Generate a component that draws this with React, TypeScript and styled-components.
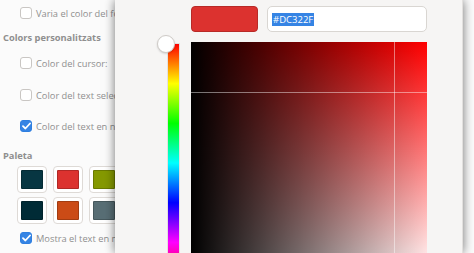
import React from "react";
import styled, { createGlobalStyle } from "styled-components";

const Global = createGlobalStyle`
  html, body { margin: 0; padding: 0; }
  body {
    width: 474px; height: 253px; overflow: hidden;
    background: #d9d9d9;
    font-family: "Open Sans", "Noto Sans", sans-serif;
  }
`;

const Screen = styled.div`
  display: flex;
  width: 474px;
  height: 253px;
  overflow: hidden;
  background: #fbfbfb;
`;

const Settings = styled.div`
  flex: 0 0 115px;
  overflow: hidden;
  white-space: nowrap;
  color: #8f8f8f;
  font-size: 9.3px;
  padding-top: 6px;
`;

const CheckRow = styled.div<{ $mt?: number }>`
  display: flex;
  align-items: center;
  gap: 4px;
  height: 14px;
  padding-left: 20px;
  margin-top: ${(p) => p.$mt ?? 0}px;
`;

const Box = styled.span<{ $on?: boolean }>`
  flex: 0 0 auto;
  width: 12px;
  height: 12px;
  border-radius: 3px;
  box-sizing: border-box;
  border: 1px solid ${(p) => (p.$on ? "#2f7fe0" : "#c9c6c3")};
  background: ${(p) => (p.$on ? "#3584e4" : "#fff")};
  display: flex;
  align-items: center;
  justify-content: center;
`;

const Heading = styled.div<{ $mt: number }>`
  font-weight: 700;
  padding-left: 3px;
  height: 14px;
  line-height: 14px;
  margin-top: ${(p) => p.$mt}px;
`;

const Palette = styled.div`
  display: grid;
  grid-template-columns: repeat(3, 30px);
  grid-auto-rows: 27px;
  column-gap: 6px;
  row-gap: 4px;
  padding-left: 17px;
  margin-top: 3px;
`;

const Swatch = styled.div`
  box-sizing: border-box;
  border: 1px solid #dedad6;
  border-radius: 4px;
  background: #fff;
  padding: 3px;
  display: flex;
`;

const SwatchColor = styled.div<{ $c: string }>`
  flex: 1;
  background: ${(p) => p.$c};
  border: 1px solid rgba(0, 0, 0, 0.2);
  border-radius: 1px;
`;

const Dialog = styled.div`
  flex: 0 0 348px;
  position: relative;
  z-index: 1;
  background: #f6f5f4;
  box-shadow: 0 0 10px rgba(0, 0, 0, 0.55);
  border-right: 1px solid #e2e0de;
  box-sizing: border-box;
  padding: 6px 0 0 48px;
  display: grid;
  grid-template-columns: 24px 236px;
  grid-template-rows: 26px 236px;
  column-gap: 4px;
  row-gap: 10px;
`;

const TopRow = styled.div`
  grid-column: 2;
  display: flex;
  gap: 9px;
`;

const ColorButton = styled.div`
  flex: 0 0 67px;
  box-sizing: border-box;
  background: #dc322f;
  border: 1px solid #b82a27;
  border-radius: 4px;
`;

const HexEntry = styled.div`
  flex: 1;
  box-sizing: border-box;
  background: #fff;
  border: 1px solid #d9d6d2;
  border-radius: 5px;
  display: flex;
  align-items: center;
  padding-left: 4px;
  font-size: 9.5px;
  color: #fff;
`;

const Selected = styled.span`
  background: #3584e4;
  padding: 0 1px;
  line-height: 13px;
`;

const HueColumn = styled.div`
  position: relative;
  padding-left: 4px;
  padding-top: 1px;
`;

const HueTrack = styled.div`
  width: 13px;
  height: 240px;
  box-sizing: border-box;
  border: 1px solid #e4e1de;
  background: linear-gradient(
    to bottom,
    #ff0000 0%,
    #ffff00 16.67%,
    #00ff00 33.33%,
    #00ffff 50%,
    #0000ff 66.67%,
    #ff00ff 83.33%,
    #ff0000 100%
  );
`;

const HueKnob = styled.div`
  position: absolute;
  left: -6px;
  top: -7px;
  width: 18px;
  height: 18px;
  box-sizing: border-box;
  border-radius: 50%;
  background: #fff;
  border: 1px solid #cfcbc7;
  box-shadow: 0 1px 2px rgba(0, 0, 0, 0.15);
`;

const SVSquare = styled.div`
  position: relative;
  background: linear-gradient(to right, #000, rgba(0, 0, 0, 0)),
    linear-gradient(to bottom, #ff0000, #ffffff);
`;

const CrossV = styled.div`
  position: absolute;
  top: 0;
  bottom: 0;
  width: 1px;
  background: rgba(255, 255, 255, 0.45);
`;

const CrossH = styled.div`
  position: absolute;
  left: 0;
  right: 0;
  height: 1px;
  background: rgba(255, 255, 255, 0.45);
`;

const Check = () => (
  <svg width="9" height="8" viewBox="0 0 9 8">
    <path d="M1 4.2 L3.4 6.5 L8 1.5" fill="none" stroke="#fff" strokeWidth="1.8" strokeLinecap="round" strokeLinejoin="round" />
  </svg>
);

const palette = ["#073642", "#dc322f", "#859900", "#002b36", "#cb4b16", "#586e75"];

export default function App() {
  const v = 0.86;
  const s = 0.79;
  return (
    <>
      <Global />
      <Screen>
        <Settings>
          <CheckRow>
            <Box />
            <span>Varia el color del fons</span>
          </CheckRow>
          <Heading $mt={11}>Colors personalitzats</Heading>
          <CheckRow $mt={11}>
            <Box />
            <span>Color del cursor:</span>
          </CheckRow>
          <CheckRow $mt={18}>
            <Box />
            <span>Color del text seleccionat:</span>
          </CheckRow>
          <CheckRow $mt={17}>
            <Box $on>
              <Check />
            </Box>
            <span>Color del text en negreta:</span>
          </CheckRow>
          <Heading $mt={16}>Paleta</Heading>
          <Palette>
            {palette.map((c) => (
              <Swatch key={c}>
                <SwatchColor $c={c} />
              </Swatch>
            ))}
          </Palette>
          <CheckRow $mt={7}>
            <Box $on>
              <Check />
            </Box>
            <span>Mostra el text en negreta en colors brillants</span>
          </CheckRow>
        </Settings>
        <Dialog>
          <TopRow>
            <ColorButton />
            <HexEntry>
              <Selected>#DC322F</Selected>
            </HexEntry>
          </TopRow>
          <HueColumn>
            <HueTrack />
            <HueKnob />
          </HueColumn>
          <SVSquare>
            <CrossV style={{ left: `${Math.round(v * 236)}px` }} />
            <CrossH style={{ top: `${Math.round((1 - s) * 236)}px` }} />
          </SVSquare>
        </Dialog>
      </Screen>
    </>
  );
}
